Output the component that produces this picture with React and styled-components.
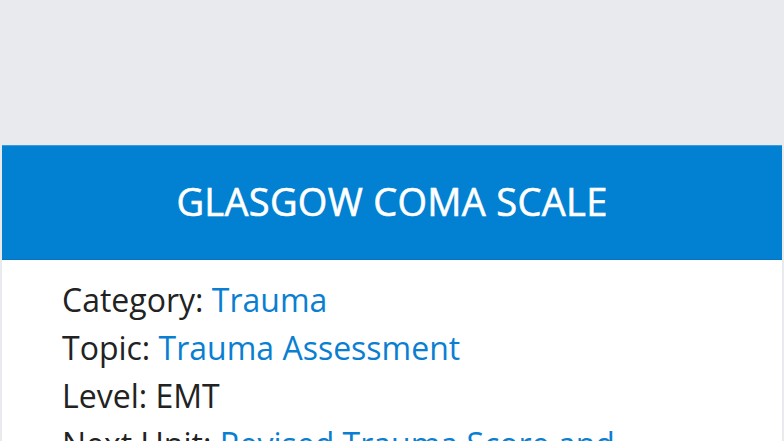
import React from "react";
import styled, { createGlobalStyle } from "styled-components";

const GlobalStyle = createGlobalStyle`
  html, body {
    margin: 0;
    padding: 0;
    background: #e9eaee;
    font-family: "Open Sans", sans-serif;
  }
`;

const App = () => {
  return (
    <>
      <GlobalStyle />
      <Page>
        <Card>
          <Header>
            <Title>GLASGOW COMA SCALE</Title>
          </Header>
          <Body>
            <Line>
              Category: <Link href="#">Trauma</Link>
            </Line>
            <Line>
              Topic: <Link href="#">Trauma Assessment</Link>
            </Line>
            <Line>Level: EMT</Line>
            <Line>
              Next Unit: <Link href="#">Revised Trauma Score and Pediatric Trauma Score</Link>
            </Line>
          </Body>
        </Card>
      </Page>
    </>
  );
};

export default App;

const Page = styled.div`
  padding: 145px 2px 0;
`;

const Card = styled.div`
  background: #ffffff;
`;

const Header = styled.div`
  background: #0281d2;
  border-top: 1px solid #3a9be0;
  border-bottom: 1px solid #0a74bd;
  height: 113px;
  box-sizing: border-box;
  height: 115px;
  padding-bottom: 3px;
  display: flex;
  align-items: center;
  justify-content: center;
`;

const Title = styled.h1`
  margin: 0;
  color: #ffffff;
  font-family: "Open Sans", sans-serif;
  font-size: 38px;
  font-weight: 400;
  letter-spacing: 0.3px;
  -webkit-text-stroke: 0.6px #ffffff;
`;

const Body = styled.div`
  padding: 16px 60px;
`;

const Line = styled.p`
  margin: 0;
  font-size: 32px;
  line-height: 48px;
  color: #222222;
`;

const Link = styled.a`
  color: #0a7fd2;
  text-decoration: none;
`;
